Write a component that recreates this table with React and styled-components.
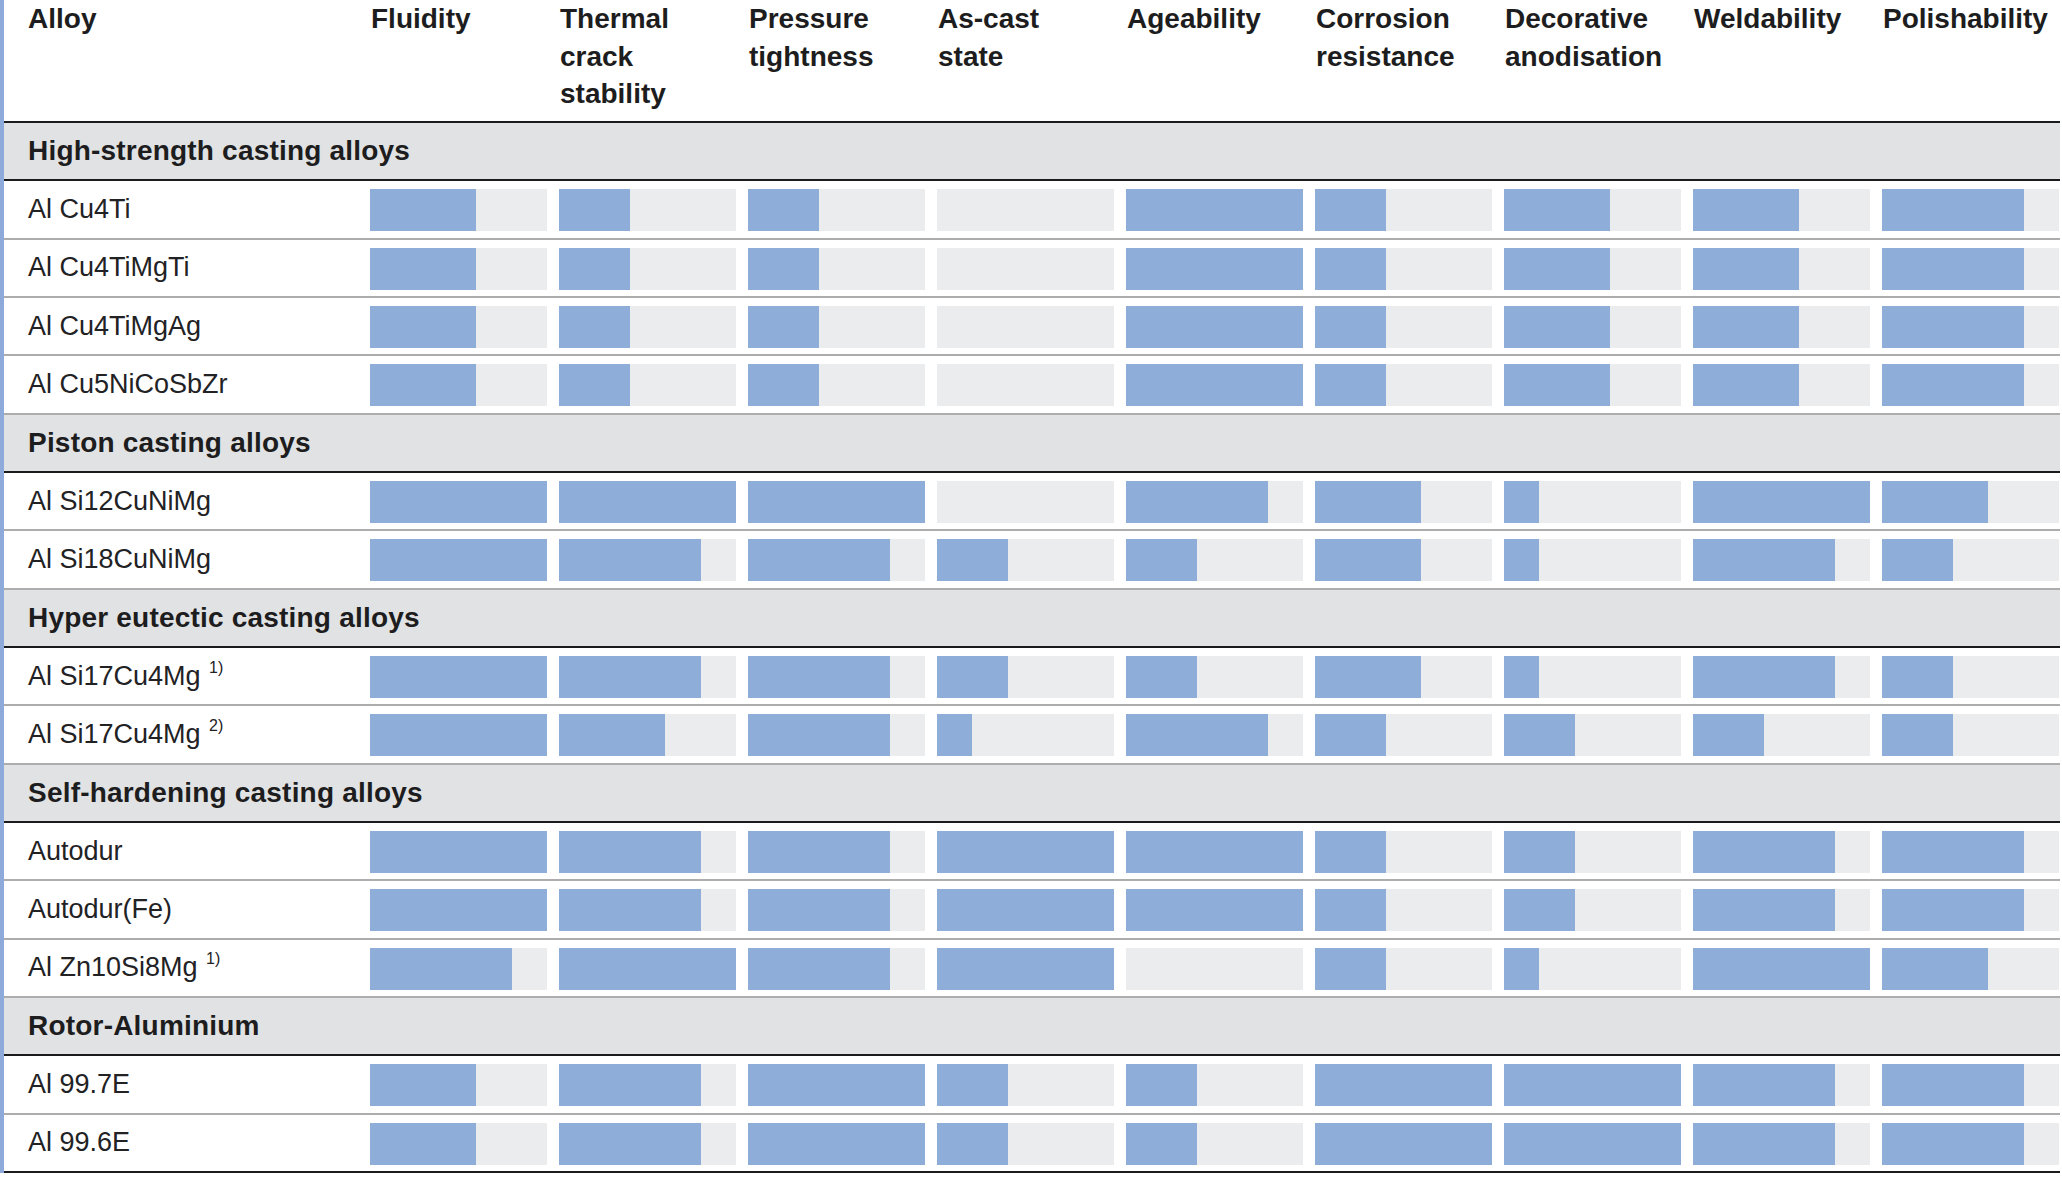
import React from "react";
import styled, { createGlobalStyle } from "styled-components";

const GlobalStyle = createGlobalStyle`
  html, body {
    margin: 0;
    padding: 0;
    background: #ffffff;
  }
  body {
    font-family: "Liberation Sans", Arial, sans-serif;
    color: #1f1f21;
  }
`;

const Page = styled.div`
  width: 2060px;
  border-left: 4px solid #8eaadb;
  box-sizing: border-box;
  background: #fff;
`;

const Grid = styled.div`
  display: grid;
  grid-template-columns: 354px repeat(9, 177px);
  column-gap: 12px;
  box-sizing: border-box;
`;

const HeaderRow = styled(Grid)`
  height: 123px;
  border-bottom: 2px solid #1b1b1d;
  align-items: start;
`;

const HeaderCell = styled.div`
  font-size: 28px;
  line-height: 37.5px;
  font-weight: 700;
  color: #1d1d20;
  padding-left: ${(p) => (p.$first ? "24px" : "1px")};
  white-space: nowrap;
`;

const SectionRow = styled.div`
  height: 58.33px;
  box-sizing: border-box;
  background: #e1e2e4;
  border-bottom: 2px solid #1b1b1d;
  display: flex;
  align-items: center;
  padding-left: 24px;
  font-size: 28px;
  font-weight: 700;
  color: #1d1d20;
  letter-spacing: 0.2px;
`;

const DataRow = styled(Grid)`
  height: 58.33px;
  border-bottom: 2px solid ${(p) => (p.$last ? "#1b1b1d" : "#adadad")};
  align-items: center;
`;

const AlloyName = styled.div`
  padding-left: 24px;
  font-size: 27px;
  font-weight: 400;
  color: #222225;
  white-space: nowrap;
`;

const Note = styled.sup`
  font-size: 16px;
  vertical-align: 12px;
  line-height: 0;
  margin-left: 1px;
`;

const Track = styled.div`
  height: 42px;
  margin-top: 2px;
  background: #ebecee;
  display: flex;
`;

const Fill = styled.div`
  height: 100%;
  background: #8fadd9;
`;

const columns = [
  ["Fluidity"],
  ["Thermal", "crack", "stability"],
  ["Pressure", "tightness"],
  ["As-cast", "state"],
  ["Ageability"],
  ["Corrosion", "resistance"],
  ["Decorative", "anodisation"],
  ["Weldability"],
  ["Polishability"],
];

const sections = [
  {
    title: "High-strength casting alloys",
    rows: [
      { name: "Al Cu4Ti", v: [3, 2, 2, 0, 5, 2, 3, 3, 4] },
      { name: "Al Cu4TiMgTi", v: [3, 2, 2, 0, 5, 2, 3, 3, 4] },
      { name: "Al Cu4TiMgAg", v: [3, 2, 2, 0, 5, 2, 3, 3, 4] },
      { name: "Al Cu5NiCoSbZr", v: [3, 2, 2, 0, 5, 2, 3, 3, 4] },
    ],
  },
  {
    title: "Piston casting alloys",
    rows: [
      { name: "Al Si12CuNiMg", v: [5, 5, 5, 0, 4, 3, 1, 5, 3] },
      { name: "Al Si18CuNiMg", v: [5, 4, 4, 2, 2, 3, 1, 4, 2] },
    ],
  },
  {
    title: "Hyper eutectic casting alloys",
    rows: [
      { name: "Al Si17Cu4Mg", note: "1)", v: [5, 4, 4, 2, 2, 3, 1, 4, 2] },
      { name: "Al Si17Cu4Mg", note: "2)", v: [5, 3, 4, 1, 4, 2, 2, 2, 2] },
    ],
  },
  {
    title: "Self-hardening casting alloys",
    rows: [
      { name: "Autodur", v: [5, 4, 4, 5, 5, 2, 2, 4, 4] },
      { name: "Autodur(Fe)", v: [5, 4, 4, 5, 5, 2, 2, 4, 4] },
      { name: "Al Zn10Si8Mg", note: "1)", v: [4, 5, 4, 5, 0, 2, 1, 5, 3] },
    ],
  },
  {
    title: "Rotor-Aluminium",
    rows: [
      { name: "Al 99.7E", v: [3, 4, 5, 2, 2, 5, 5, 4, 4] },
      { name: "Al 99.6E", v: [3, 4, 5, 2, 2, 5, 5, 4, 4] },
    ],
  },
];

function Bar({ value }) {
  return (
    <Track>
      {value > 0 && <Fill style={{ width: `${value * 20}%` }} />}
    </Track>
  );
}

export default function App() {
  return (
    <>
      <GlobalStyle />
      <Page>
        <HeaderRow>
          <HeaderCell $first>Alloy</HeaderCell>
          {columns.map((lines, i) => (
            <HeaderCell key={i}>
              {lines.map((l, j) => (
                <React.Fragment key={j}>
                  {j > 0 && <br />}
                  {l}
                </React.Fragment>
              ))}
            </HeaderCell>
          ))}
        </HeaderRow>
        {sections.map((s, si) => (
          <React.Fragment key={si}>
            <SectionRow>{s.title}</SectionRow>
            {s.rows.map((r, ri) => (
              <DataRow
                key={ri}
                $last={si === sections.length - 1 && ri === s.rows.length - 1}
              >
                <AlloyName>
                  {r.name}
                  {r.note && (
                    <>
                      {" "}
                      <Note>{r.note}</Note>
                    </>
                  )}
                </AlloyName>
                {r.v.map((val, vi) => (
                  <Bar key={vi} value={val} />
                ))}
              </DataRow>
            ))}
          </React.Fragment>
        ))}
      </Page>
    </>
  );
}
